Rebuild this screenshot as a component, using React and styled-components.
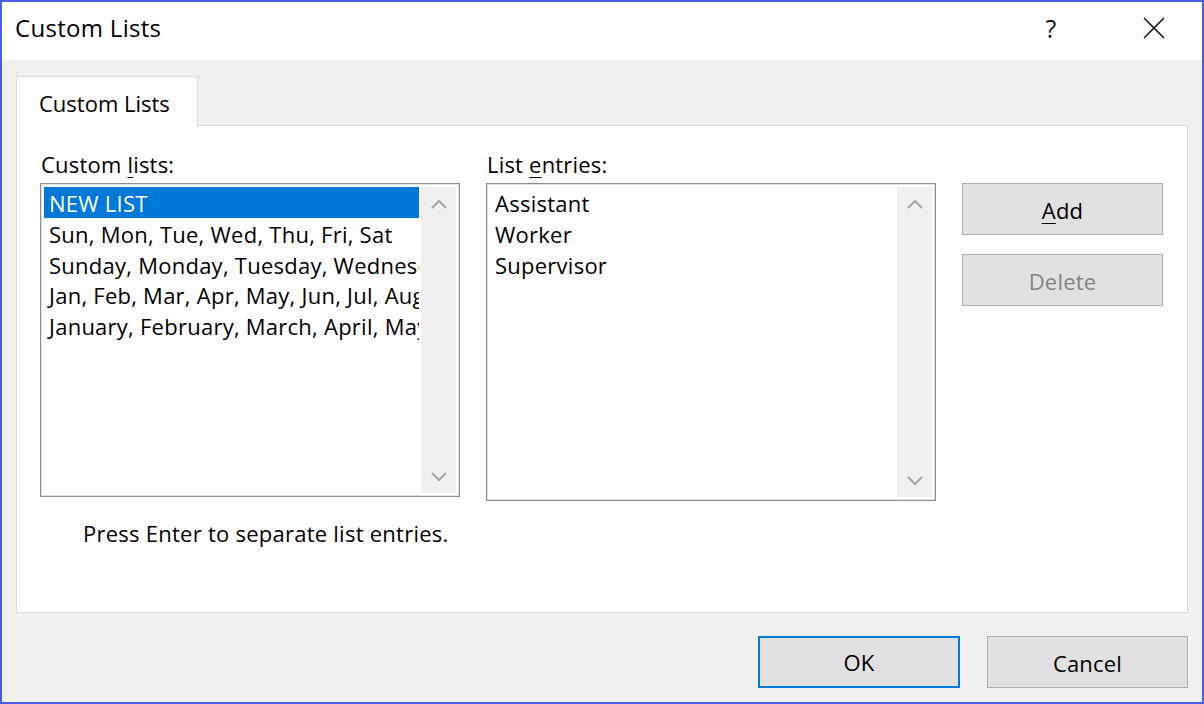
import React from "react"
import styled, { createGlobalStyle } from "styled-components"

const GlobalStyle = createGlobalStyle`
  html, body {
    margin: 0;
    padding: 0;
    background: #ffffff;
  }
  * {
    box-sizing: border-box;
  }
`

const FONT = `"Open Sans", "Noto Sans", "Liberation Sans", sans-serif`

const Window = styled.div`
  width: 1204px;
  height: 704px;
  border: 2px solid #4a5cf0;
  display: flex;
  flex-direction: column;
  font-family: ${FONT};
  color: #000;
  background: #f0f0f0;
`

const TitleBar = styled.div`
  height: 58px;
  background: #ffffff;
  display: flex;
  align-items: center;
  padding-left: 13px;
`

const Title = styled.div`
  flex: 1;
  font-size: 24px;
  letter-spacing: 0.3px;
  margin-top: -8px;
`

const TitleButton = styled.div`
  width: ${(p) => p.w}px;
  height: 58px;
  display: flex;
  align-items: center;
  justify-content: center;
  font-size: 25px;
  color: #111;
  padding-bottom: 6px;
`

const Body = styled.div`
  flex: 1;
  display: flex;
  flex-direction: column;
  padding: 16px 14px 13px 14px;
`

const TabStrip = styled.div`
  display: flex;
  height: 49px;
`

const Tab = styled.div`
  width: 182px;
  height: 50px;
  background: #ffffff;
  border: 1px solid #d9d9d9;
  border-bottom: none;
  position: relative;
  z-index: 1;
  font-size: 22px;
  display: flex;
  align-items: center;
  padding-left: 22px;
  padding-top: 2px;
`

const Panel = styled.div`
  height: 488px;
  background: #ffffff;
  border: 1px solid #d9d9d9;
  padding: 26px 0 0 23px;
  display: flex;
  flex-direction: column;
`

const Columns = styled.div`
  display: flex;
  gap: 26px;
  align-items: flex-start;
`

const Column = styled.div`
  display: flex;
  flex-direction: column;
`

const Label = styled.div`
  font-size: 22px;
  letter-spacing: 0.2px;
  line-height: 24px;
  height: 24px;
  margin-bottom: 7px;
  padding-left: 1px;
  white-space: nowrap;
`

const U = styled.span`
  text-decoration: underline;
  text-underline-offset: 4px;
  text-decoration-thickness: 1px;
`

const ListBox = styled.div`
  width: ${(p) => p.w}px;
  height: ${(p) => p.h}px;
  border: 1px solid #8c8c8c;
  box-shadow: inset 0 0 0 1px #e3e3e3;
  background: #fff;
  display: flex;
  padding: 3px;
`

const Items = styled.div`
  flex: 1;
  min-width: 0;
  overflow: hidden;
`

const Item = styled.div`
  height: 30.75px;
  line-height: 30px;
  padding-top: 1px;
  font-size: 22px;
  letter-spacing: 0.25px;
  white-space: nowrap;
  overflow: hidden;
  padding-left: 5px;
  background: ${(p) => (p.selected ? "#0078d7" : "transparent")};
  color: ${(p) => (p.selected ? "#ffffff" : "#000")};
`

const ScrollBar = styled.div`
  width: 35px;
  flex-shrink: 0;
  margin-left: ${(p) => p.gap}px;
  background: #f0f0f0;
  display: flex;
  flex-direction: column;
  justify-content: space-between;
  align-items: center;
  padding: 12px 0 11px 0;
`

const ButtonColumn = styled.div`
  display: flex;
  flex-direction: column;
  gap: 19px;
  padding-top: 31px;
`

const Button = styled.div`
  width: ${(p) => p.w}px;
  height: 52px;
  background: #e1e1e1;
  border: ${(p) => (p.primary ? "2px solid #0078d7" : "1px solid #adadad")};
  display: flex;
  align-items: center;
  justify-content: center;
  font-size: 22px;
  letter-spacing: 0.2px;
  color: ${(p) => (p.disabled ? "#838383" : "#000")};
  padding-top: ${(p) => (p.primary ? 0 : 2)}px;
`

const Hint = styled.div`
  font-size: 22px;
  letter-spacing: 0.25px;
  margin: 17px 0 0 43px;
`

const Footer = styled.div`
  margin-top: 23px;
  display: flex;
  justify-content: flex-end;
  gap: 27px;
`

const Chevron = ({ up }) => (
  <svg width="16" height="10" viewBox="0 0 16 10">
    <polyline
      points={up ? "1,9 8,2 15,9" : "1,1 8,8 15,1"}
      fill="none"
      stroke="#a6a6a6"
      strokeWidth="2"
    />
  </svg>
)

const customLists = [
  "NEW LIST",
  "Sun, Mon, Tue, Wed, Thu, Fri, Sat",
  "Sunday, Monday, Tuesday, Wednesday, Thursday, Friday, Saturday",
  "Jan, Feb, Mar, Apr, May, Jun, Jul, Aug, Sep, Oct, Nov, Dec",
  "January, February, March, April, May, June, July, August",
]

const entries = ["Assistant", "Worker", "Supervisor"]

export default function App() {
  return (
    <>
      <GlobalStyle />
      <Window>
        <TitleBar>
          <Title>Custom Lists</Title>
          <TitleButton w={110}>?</TitleButton>
          <TitleButton w={96}>
            <svg width="22" height="22" viewBox="0 0 22 22">
              <path d="M1 1 L21 21 M21 1 L1 21" stroke="#111" strokeWidth="1.6" />
            </svg>
          </TitleButton>
        </TitleBar>
        <Body>
          <TabStrip>
            <Tab>Custom Lists</Tab>
          </TabStrip>
          <Panel>
            <Columns>
              <Column>
                <Label>
                  Custom <U>l</U>ists:
                </Label>
                <ListBox w={420} h={314}>
                  <Items>
                    {customLists.map((l, i) => (
                      <Item key={l} selected={i === 0}>
                        {l}
                      </Item>
                    ))}
                  </Items>
                  <ScrollBar gap={2}>
                    <Chevron up />
                    <Chevron />
                  </ScrollBar>
                </ListBox>
              </Column>
              <Column>
                <Label>
                  List <U>e</U>ntries:
                </Label>
                <ListBox w={450} h={318}>
                  <Items>
                    {entries.map((e) => (
                      <Item key={e}>{e}</Item>
                    ))}
                  </Items>
                  <ScrollBar gap={0}>
                    <Chevron up />
                    <Chevron />
                  </ScrollBar>
                </ListBox>
              </Column>
              <ButtonColumn>
                <Button w={201}>
                  <span>
                    <U>A</U>dd
                  </span>
                </Button>
                <Button w={201} disabled>
                  Delete
                </Button>
              </ButtonColumn>
            </Columns>
            <Hint>Press Enter to separate list entries.</Hint>
          </Panel>
          <Footer>
            <Button w={202} primary>
              OK
            </Button>
            <Button w={201}>Cancel</Button>
          </Footer>
        </Body>
      </Window>
    </>
  )
}
